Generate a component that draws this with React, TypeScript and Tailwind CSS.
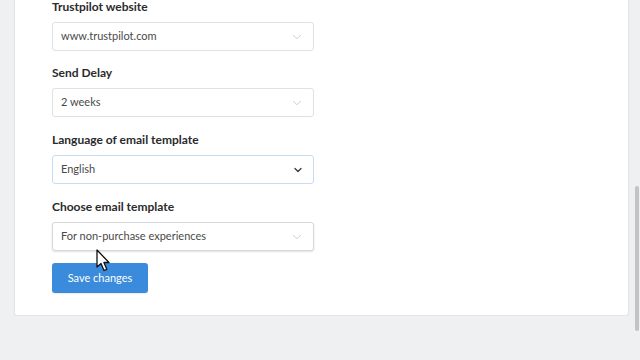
import { ChevronDown } from "lucide-react"

type Field = {
  label: string
  value: string
  focused?: boolean
}

const fields: Field[] = [
  { label: "Trustpilot website", value: "www.trustpilot.com" },
  { label: "Send Delay", value: "2 weeks" },
  { label: "Language of email template", value: "English", focused: true },
  { label: "Choose email template", value: "For non-purchase experiences" },
]

function Cursor() {
  return (
    <svg
      className="absolute left-[96px] top-[249px] pointer-events-none"
      width="16"
      height="24"
      viewBox="0 0 16 24"
    >
      <path
        d="M1 1 L1 18 L5 14.5 L8 21.5 L10.8 20.3 L7.9 13.5 L13 13.5 Z"
        fill="#ffffff"
        stroke="#111111"
        strokeWidth="1.3"
        strokeLinejoin="round"
      />
    </svg>
  )
}

export default function App() {
  return (
    <div
      className="relative flex h-[360px] w-[640px] overflow-hidden bg-[#eff0f2]"
      style={{ fontFamily: "Lato, 'Open Sans', sans-serif" }}
    >
      <div className="flex flex-1 items-start pl-[14px] pr-[5px]">
        <div className="w-full rounded-b-[3px] border border-t-0 border-[#e1e3e6] bg-white pl-[37px] pb-[22px]">
          <div className="flex w-[262px] flex-col">
            {fields.map((f, i) => (
              <div
                key={f.label}
                className={i === 0 ? "-mt-[1px]" : i === 1 ? "mt-[14px]" : "mt-[15px]"}
              >
                <div className="mb-[7px] h-4 text-[12px] font-bold leading-4 text-[#2b2b2b]">
                  {f.label}
                </div>
                <div
                  className={
                    "flex h-[29px] items-center justify-between rounded-[3px] border bg-white pl-[8px] pr-[9px] " +
                    (f.focused
                      ? "border-[#c6dcf3]"
                      : i === 3
                        ? "border-[#d6d8db] shadow-[0_1px_2px_rgba(0,0,0,0.12)]"
                        : "border-[#dfe1e4]")
                  }
                >
                  <span className="text-[11px] text-[#4a4a4a]">{f.value}</span>
                  <ChevronDown
                    size={f.focused ? 12 : 14}
                    strokeWidth={f.focused ? 2.6 : 1.4}
                    className={f.focused ? "text-[#3a3a3a]" : "text-[#bfc2c5]"}
                  />
                </div>
              </div>
            ))}
            <button className="mt-[12px] flex h-[30px] w-[96px] items-center justify-center rounded-[3px] bg-[#3a8bdb] text-[11px] text-white shadow-[0_1px_1px_rgba(0,0,0,0.08)]">
              Save changes
            </button>
          </div>
        </div>
      </div>
      <div className="relative w-[6px]">
        <div className="absolute left-[1px] top-[186px] h-[145px] w-[4px] rounded-sm bg-[#c3c3c3]" />
      </div>
      <Cursor />
    </div>
  )
}
